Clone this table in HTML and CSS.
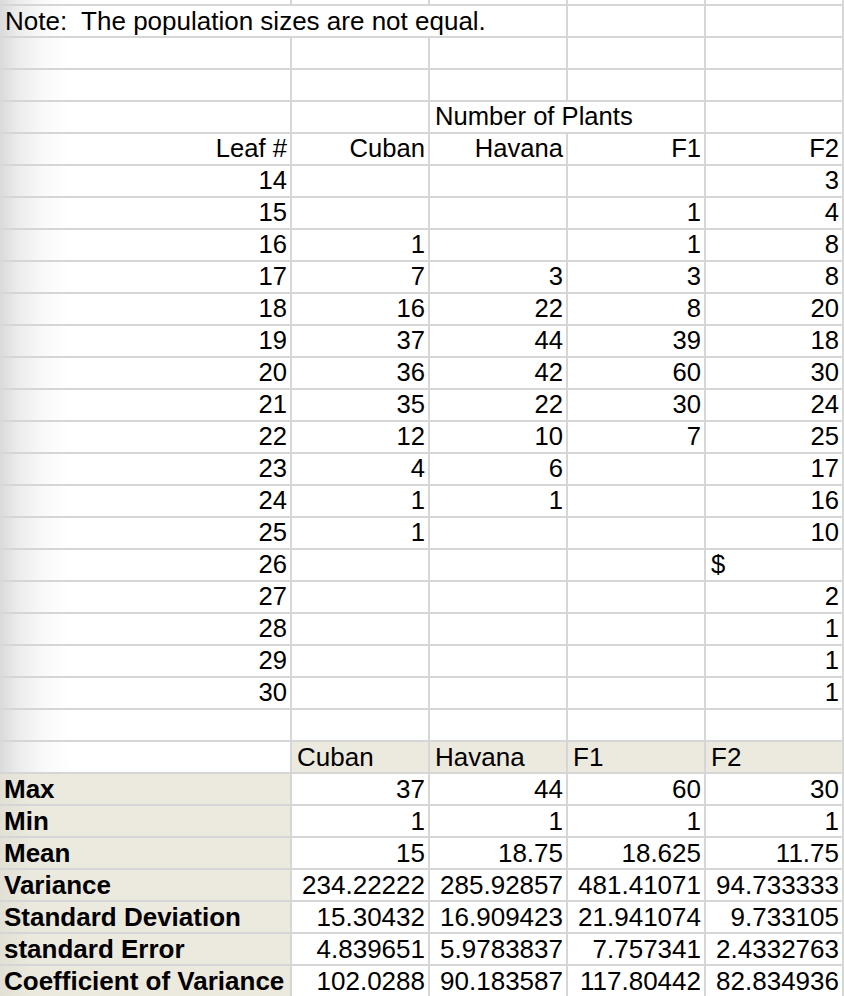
FILE: index.html
```html
<!DOCTYPE html>
<html>
<head>
<meta charset="utf-8">
<link rel="stylesheet" href="styles.css">
</head>
<body>
<div class="sheet">
  <div class="c a top"></div><div class="c top"></div><div class="c top"></div><div class="c top"></div><div class="c top"></div>

  <div class="c a l s3"><span class="t note">Note:&nbsp; The population sizes are not equal.</span></div><div class="c"></div><div class="c"></div>
  <div class="c a"></div><div class="c"></div><div class="c"></div><div class="c"></div><div class="c"></div>
  <div class="c a"></div><div class="c"></div><div class="c"></div><div class="c"></div><div class="c"></div>
  <div class="c a"></div><div class="c"></div><div class="c l s2"><span class="t up">Number of Plants</span></div><div class="c"></div>

  <div class="c a r"><span class="t up">Leaf #</span></div><div class="c r"><span class="t up">Cuban</span></div><div class="c r"><span class="t up">Havana</span></div><div class="c r"><span class="t up">F1</span></div><div class="c r"><span class="t up">F2</span></div>

  <div class="c a r"><span class="t up">14</span></div><div class="c"></div><div class="c"></div><div class="c"></div><div class="c r"><span class="t up">3</span></div>
  <div class="c a r"><span class="t up">15</span></div><div class="c"></div><div class="c"></div><div class="c r"><span class="t up">1</span></div><div class="c r"><span class="t up">4</span></div>
  <div class="c a r"><span class="t up">16</span></div><div class="c r"><span class="t up">1</span></div><div class="c"></div><div class="c r"><span class="t up">1</span></div><div class="c r"><span class="t up">8</span></div>
  <div class="c a r"><span class="t up">17</span></div><div class="c r"><span class="t up">7</span></div><div class="c r"><span class="t up">3</span></div><div class="c r"><span class="t up">3</span></div><div class="c r"><span class="t up">8</span></div>
  <div class="c a r"><span class="t up">18</span></div><div class="c r"><span class="t up">16</span></div><div class="c r"><span class="t up">22</span></div><div class="c r"><span class="t up">8</span></div><div class="c r"><span class="t up">20</span></div>
  <div class="c a r"><span class="t up">19</span></div><div class="c r"><span class="t up">37</span></div><div class="c r"><span class="t up">44</span></div><div class="c r"><span class="t up">39</span></div><div class="c r"><span class="t up">18</span></div>
  <div class="c a r"><span class="t up">20</span></div><div class="c r"><span class="t up">36</span></div><div class="c r"><span class="t up">42</span></div><div class="c r"><span class="t up">60</span></div><div class="c r"><span class="t up">30</span></div>
  <div class="c a r"><span class="t up">21</span></div><div class="c r"><span class="t up">35</span></div><div class="c r"><span class="t up">22</span></div><div class="c r"><span class="t up">30</span></div><div class="c r"><span class="t up">24</span></div>
  <div class="c a r"><span class="t up">22</span></div><div class="c r"><span class="t up">12</span></div><div class="c r"><span class="t up">10</span></div><div class="c r"><span class="t up">7</span></div><div class="c r"><span class="t up">25</span></div>
  <div class="c a r"><span class="t up">23</span></div><div class="c r"><span class="t up">4</span></div><div class="c r"><span class="t up">6</span></div><div class="c"></div><div class="c r"><span class="t up">17</span></div>
  <div class="c a r"><span class="t up">24</span></div><div class="c r"><span class="t up">1</span></div><div class="c r"><span class="t up">1</span></div><div class="c"></div><div class="c r"><span class="t up">16</span></div>
  <div class="c a r"><span class="t up">25</span></div><div class="c r"><span class="t up">1</span></div><div class="c"></div><div class="c"></div><div class="c r"><span class="t up">10</span></div>
  <div class="c a r"><span class="t up">26</span></div><div class="c"></div><div class="c"></div><div class="c"></div><div class="c l"><span class="t up">$</span></div>
  <div class="c a r"><span class="t up">27</span></div><div class="c"></div><div class="c"></div><div class="c"></div><div class="c r"><span class="t up">2</span></div>
  <div class="c a r"><span class="t up">28</span></div><div class="c"></div><div class="c"></div><div class="c"></div><div class="c r"><span class="t up">1</span></div>
  <div class="c a r"><span class="t up">29</span></div><div class="c"></div><div class="c"></div><div class="c"></div><div class="c r"><span class="t up">1</span></div>
  <div class="c a r"><span class="t up">30</span></div><div class="c"></div><div class="c"></div><div class="c"></div><div class="c r"><span class="t up">1</span></div>

  <div class="c a"></div><div class="c"></div><div class="c"></div><div class="c"></div><div class="c"></div>

  <div class="c a"></div><div class="c hd l"><span class="t st">Cuban</span></div><div class="c hd l"><span class="t st">Havana</span></div><div class="c hd l"><span class="t st">F1</span></div><div class="c hd l"><span class="t st">F2</span></div>

  <div class="c lbl l"><span class="t st b">Max</span></div><div class="c r"><span class="t st">37</span></div><div class="c r"><span class="t st">44</span></div><div class="c r"><span class="t st">60</span></div><div class="c r"><span class="t st">30</span></div>
  <div class="c lbl l"><span class="t st b">Min</span></div><div class="c r"><span class="t st">1</span></div><div class="c r"><span class="t st">1</span></div><div class="c r"><span class="t st">1</span></div><div class="c r"><span class="t st">1</span></div>
  <div class="c lbl l"><span class="t st b">Mean</span></div><div class="c r"><span class="t st">15</span></div><div class="c r"><span class="t st">18.75</span></div><div class="c r"><span class="t st">18.625</span></div><div class="c r"><span class="t st">11.75</span></div>
  <div class="c lbl l"><span class="t st b">Variance</span></div><div class="c r"><span class="t st">234.22222</span></div><div class="c r"><span class="t st">285.92857</span></div><div class="c r"><span class="t st">481.41071</span></div><div class="c r"><span class="t st">94.733333</span></div>
  <div class="c lbl l"><span class="t st b">Standard Deviation</span></div><div class="c r"><span class="t st">15.30432</span></div><div class="c r"><span class="t st">16.909423</span></div><div class="c r"><span class="t st">21.941074</span></div><div class="c r"><span class="t st">9.733105</span></div>
  <div class="c lbl l"><span class="t st b">standard Error</span></div><div class="c r"><span class="t st">4.839651</span></div><div class="c r"><span class="t st">5.9783837</span></div><div class="c r"><span class="t st">7.757341</span></div><div class="c r"><span class="t st">2.4332763</span></div>
  <div class="c lbl l"><span class="t st b">Coefficient of Variance</span></div><div class="c r"><span class="t st">102.0288</span></div><div class="c r"><span class="t st">90.183587</span></div><div class="c r"><span class="t st">117.80442</span></div><div class="c r"><span class="t st">82.834936</span></div>
</div>
</body>
</html>
```
FILE: styles.css
```css
html, body {
  margin: 0;
  padding: 0;
  background: #ffffff;
  overflow: hidden;
}

.sheet {
  display: grid;
  grid-template-columns: 290px 136px 136px 136px 136px;
  grid-template-rows: 4px;
  grid-auto-rows: 30px;
  column-gap: 2px;
  row-gap: 2px;
  width: 842px;
  padding-right: 2px;
  background: #d6d6d6;
  font-family: "Liberation Sans", Arial, sans-serif;
  color: #000;
}

.c {
  background: #ffffff;
  display: flex;
  align-items: center;
  overflow: visible;
  white-space: nowrap;
  min-width: 0;
}

.a {
  background: linear-gradient(to right, #dadada 0px, #ececec 18px, #fafafa 45px, #ffffff 70px);
}

.r {
  justify-content: flex-end;
  padding-right: 3px;
}

.l {
  justify-content: flex-start;
  padding-left: 5px;
}

.s3 { grid-column: span 3; }
.s2 { grid-column: span 2; }

.t {
  display: inline-block;
  line-height: 1;
}

.note {
  font-size: 26px;
}

.up {
  font-size: 25.6px;
}

.st {
  font-size: 26px;
}

.b { font-weight: bold; }

.hd { background: #ece9df; }

.lbl {
  background: linear-gradient(to right, #e2dfd6 0px, #ebe8de 30px, #ece9df 60px);
  padding-left: 4px;
}
```
